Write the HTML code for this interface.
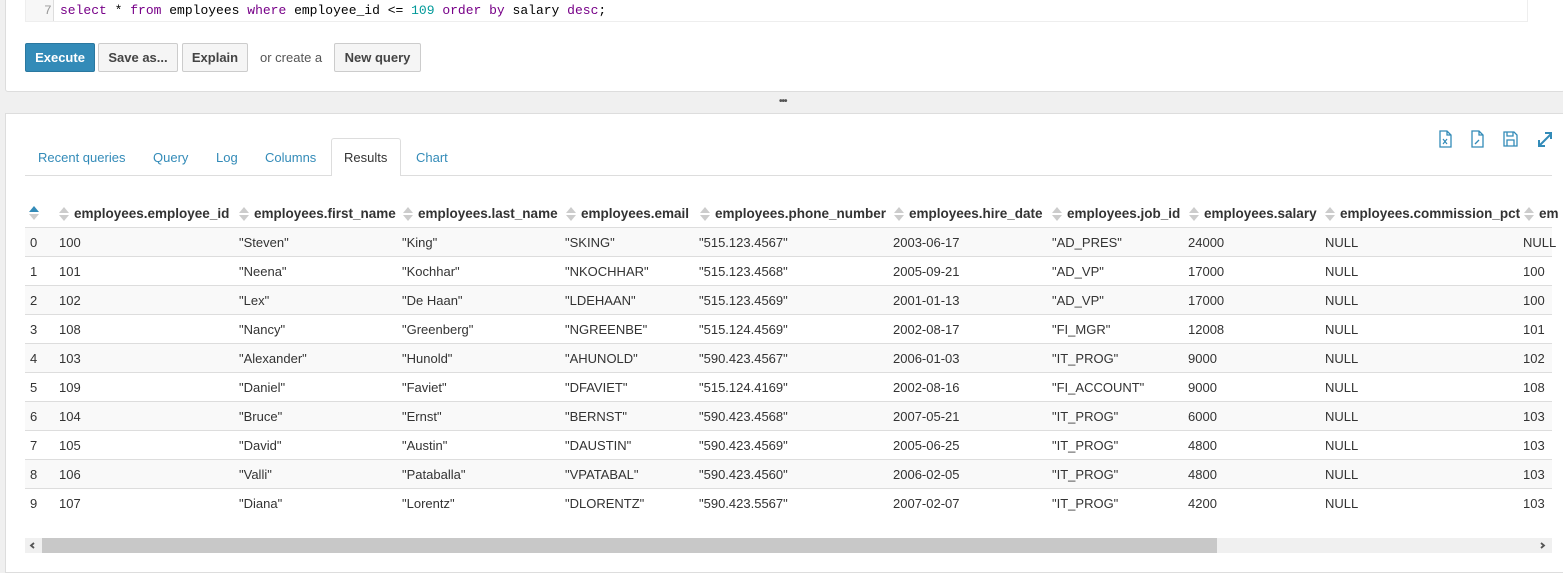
<!DOCTYPE html>
<html><head><meta charset="utf-8"><style>
*{margin:0;padding:0;box-sizing:border-box}
body{width:1563px;height:568px;overflow:hidden;background:#f0f0f0;font-family:"Liberation Sans",Arial,sans-serif;font-size:13px;color:#333;position:relative}
.p{position:absolute;background:#fff;border:1px solid #ddd}
.a{position:absolute;white-space:nowrap}
.btn{position:absolute;top:43px;height:29px;border:1px solid #ccc;border-radius:2px;background:#f5f5f5;font-weight:bold;font-size:13px;line-height:27px;text-align:center;color:#444}
.tab{position:absolute;top:150px;color:#338bb8;font-size:13px}
.row{position:absolute;left:25px;width:1527px;height:29px;border-top:1px solid #ddd}
.h{font-weight:bold;font-size:13.5px;color:#333}
.ar{position:absolute;width:10px;height:15px}
.ar:before{content:"";position:absolute;left:0;top:0;border-left:5px solid transparent;border-right:5px solid transparent;border-bottom:6px solid #ccc}
.ar:after{content:"";position:absolute;left:0;top:8px;border-left:5px solid transparent;border-right:5px solid transparent;border-top:6px solid #ccc}
.ar.up:before{border-bottom-color:#338bb8}
</style></head><body>
<div class="p" style="left:5px;top:-2px;width:1560px;height:94px;border-radius:0 0 3px 3px"></div>
<div class="a" style="left:25px;top:-2px;width:1503px;height:24px;border:1px solid #eee;background:#fff"></div>
<div class="a" style="left:26px;top:-2px;width:28px;height:23px;background:#f7f7f7;border-right:1px solid #ddd"></div>
<div class="a" style="left:44px;top:3px;font-family:'Liberation Mono',monospace;font-size:13px;color:#999">7</div>
<div class="a" style="left:60px;top:3px;font-family:'Liberation Mono',monospace;font-size:13px;color:#000"><span style="color:#708">select</span> * <span style="color:#708">from</span> employees <span style="color:#708">where</span> employee_id &lt;= <span style="color:#099">109</span> <span style="color:#708">order by</span> salary <span style="color:#708">desc</span>;</div>
<div class="btn" style="left:25px;width:70px;background:#338bb8;border-color:#2a78a0;color:#fff">Execute</div>
<div class="btn" style="left:98px;width:80px">Save as...</div>
<div class="btn" style="left:182px;width:66px">Explain</div>
<div class="a" style="left:260px;top:50px;color:#555">or create a</div>
<div class="btn" style="left:334px;width:87px">New query</div>
<div class="a" style="left:779px;top:96px;font-size:10px;font-weight:bold;color:#555;letter-spacing:-1px">•••</div>
<div class="p" style="left:5px;top:113px;width:1560px;height:460px"></div>
<div class="a" style="left:25px;top:175px;width:1527px;border-top:1px solid #ddd"></div>
<div class="a" style="left:331px;top:138px;width:70px;height:38px;background:#fff;border:1px solid #ddd;border-bottom:none;border-radius:3px 3px 0 0"></div>
<div class="tab" style="left:38px">Recent queries</div>
<div class="tab" style="left:153px">Query</div>
<div class="tab" style="left:216px">Log</div>
<div class="tab" style="left:265px">Columns</div>
<div class="tab" style="left:344px;color:#333">Results</div>
<div class="tab" style="left:416px">Chart</div>
<svg class="a" style="left:1438px;top:130px" width="120" height="18" fill="none" stroke="#338bb8" stroke-width="1.3">
<path d="M2 1h7l4 4v12H2z M9 1v4h4"/><path d="M5 9l4 5M9 9l-4 5" stroke-width="1.2"/>
<path d="M34 1h7l4 4v12H34z M41 1v4h4"/><path d="M37 14l4-4" />
<path d="M66 2h10l3 3v11H66z M69 2v4h6V2 M69 10h7v6h-7z"/>
<path d="M101 16l12-12 M107 3h6v6 M101 10v6h6" stroke-width="2"/>
</svg>
<div class="ar up" style="left:29px;top:206px"></div>
<div class="h">
<div class="ar" style="left:59px;top:207px"></div><div class="a" style="left:74px;top:206px">employees.employee_id</div>
<div class="ar" style="left:239px;top:207px"></div><div class="a" style="left:254px;top:206px">employees.first_name</div>
<div class="ar" style="left:403px;top:207px"></div><div class="a" style="left:418px;top:206px">employees.last_name</div>
<div class="ar" style="left:566px;top:207px"></div><div class="a" style="left:581px;top:206px">employees.email</div>
<div class="ar" style="left:700px;top:207px"></div><div class="a" style="left:715px;top:206px">employees.phone_number</div>
<div class="ar" style="left:894px;top:207px"></div><div class="a" style="left:909px;top:206px">employees.hire_date</div>
<div class="ar" style="left:1052px;top:207px"></div><div class="a" style="left:1067px;top:206px">employees.job_id</div>
<div class="ar" style="left:1189px;top:207px"></div><div class="a" style="left:1204px;top:206px">employees.salary</div>
<div class="ar" style="left:1325px;top:207px"></div><div class="a" style="left:1340px;top:206px">employees.commission_pct</div>
<div class="ar" style="left:1524px;top:207px"></div><div class="a" style="left:1539px;top:206px">em</div>
</div>
<div id="rows"></div>
<script>
var d=[["0","100","\"Steven\"","\"King\"","\"SKING\"","\"515.123.4567\"","2003-06-17","\"AD_PRES\"","24000","NULL","NULL"],
["1","101","\"Neena\"","\"Kochhar\"","\"NKOCHHAR\"","\"515.123.4568\"","2005-09-21","\"AD_VP\"","17000","NULL","100"],
["2","102","\"Lex\"","\"De Haan\"","\"LDEHAAN\"","\"515.123.4569\"","2001-01-13","\"AD_VP\"","17000","NULL","100"],
["3","108","\"Nancy\"","\"Greenberg\"","\"NGREENBE\"","\"515.124.4569\"","2002-08-17","\"FI_MGR\"","12008","NULL","101"],
["4","103","\"Alexander\"","\"Hunold\"","\"AHUNOLD\"","\"590.423.4567\"","2006-01-03","\"IT_PROG\"","9000","NULL","102"],
["5","109","\"Daniel\"","\"Faviet\"","\"DFAVIET\"","\"515.124.4169\"","2002-08-16","\"FI_ACCOUNT\"","9000","NULL","108"],
["6","104","\"Bruce\"","\"Ernst\"","\"BERNST\"","\"590.423.4568\"","2007-05-21","\"IT_PROG\"","6000","NULL","103"],
["7","105","\"David\"","\"Austin\"","\"DAUSTIN\"","\"590.423.4569\"","2005-06-25","\"IT_PROG\"","4800","NULL","103"],
["8","106","\"Valli\"","\"Pataballa\"","\"VPATABAL\"","\"590.423.4560\"","2006-02-05","\"IT_PROG\"","4800","NULL","103"],
["9","107","\"Diana\"","\"Lorentz\"","\"DLORENTZ\"","\"590.423.5567\"","2007-02-07","\"IT_PROG\"","4200","NULL","103"]];
var xs=[30,59,239,402,565,699,893,1052,1188,1325,1523],h="";
d.forEach(function(r,i){var y=227+i*29;h+='<div class="row" style="top:'+y+'px;background:'+(i%2==0?'#f9f9f9':'#fff')+'"></div>';
r.forEach(function(c,j){h+='<div class="a" style="left:'+xs[j]+'px;top:'+(y+8)+'px">'+c+'</div>';});});
document.getElementById('rows').innerHTML=h;
</script>
<div class="a" style="left:25px;top:538px;width:1527px;height:15px;background:#f0f0f0"></div>
<div class="a" style="left:42px;top:538px;width:1175px;height:15px;background:#c8c8c8"></div>
<svg class="a" style="left:25px;top:538px" width="1527" height="15" fill="none" stroke="#555" stroke-width="1.8">
<path d="M9 5l-3 2.5 3 2.5"/><path d="M1516 5l3 2.5-3 2.5"/>
</svg>
</body></html>
